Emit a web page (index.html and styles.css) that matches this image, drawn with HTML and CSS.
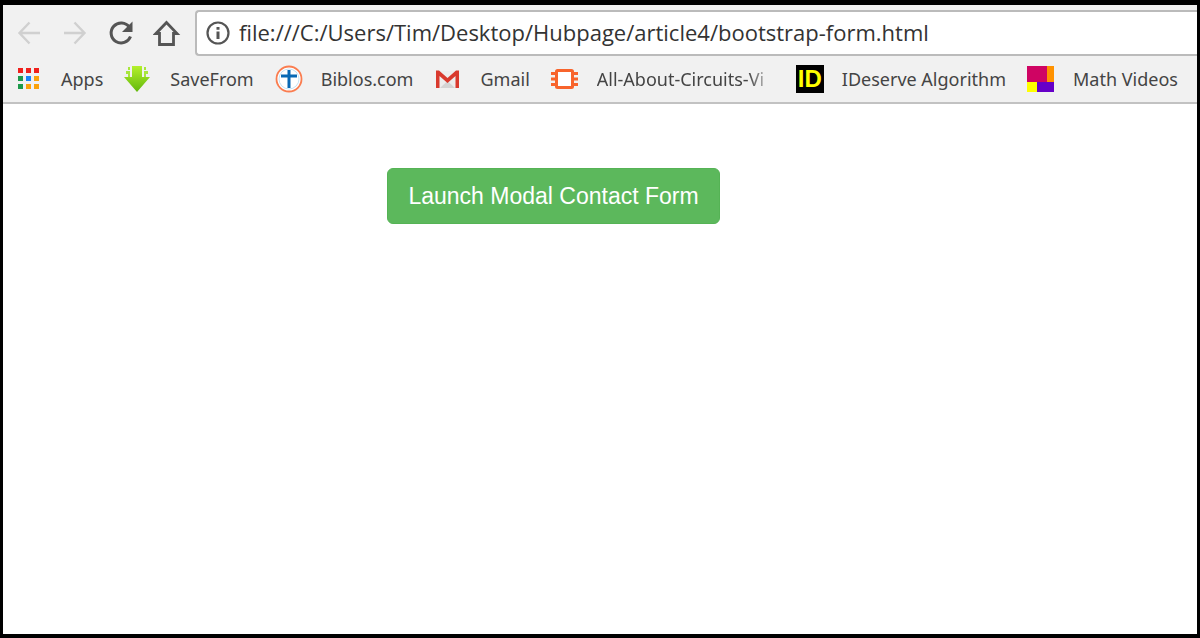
FILE: index.html
```html
<!DOCTYPE html>
<html lang="en">
<head>
<meta charset="utf-8">
<title>Bootstrap form</title>
<link rel="stylesheet" href="styles.css">
</head>
<body>
<div class="browser">
  <header class="chrome">
    <div class="toolbar">
      <div class="nav-group">
        <button class="nav-button nav-button--off" type="button" aria-label="Back">
          <svg viewBox="0 0 28 28"><path d="M25 14H5M14.500 3.500L4.500 14L14.500 24.500" fill="none" stroke="currentColor" stroke-width="2.400"/></svg>
        </button>
        <button class="nav-button nav-button--off" type="button" aria-label="Forward">
          <svg viewBox="0 0 28 28"><path d="M3 14H23M13.500 3.500L23.500 14L13.500 24.500" fill="none" stroke="currentColor" stroke-width="2.400"/></svg>
        </button>
        <button class="nav-button" type="button" aria-label="Reload">
          <svg viewBox="0 0 28 28"><path d="M22.300 8.200A10 10 0 1 0 23.500 17.500" fill="none" stroke="currentColor" stroke-width="3"/><path d="M25.500 2.500V13H15Z" fill="currentColor"/></svg>
        </button>
        <button class="nav-button" type="button" aria-label="Home">
          <svg viewBox="0 0 28 28"><path d="M13.500 3.500L3 14.500H6.500V25.500H20.500V14.500H24Z" fill="none" stroke="currentColor" stroke-width="2.800"/></svg>
        </button>
      </div>
      <label class="address">
        <svg class="info" viewBox="0 0 24 24" role="img" aria-label="Page information"><circle cx="12" cy="12" r="10.500" fill="none" stroke="currentColor" stroke-width="2.200"/><path d="M10.500 10.500h3v7.500h-3zM10.500 6h3v2.800h-3z" fill="currentColor"/></svg>
        <input class="url" type="text" aria-label="Address" value="file:///C:/Users/Tim/Desktop/Hubpage/article4/bootstrap-form.html">
      </label>
    </div>
    <nav class="bookmarks" aria-label="Bookmarks">
      <a class="bookmark" href="#">
        <svg class="icon" viewBox="0 0 28 28"><path d="M3 3h5v5H3zM11 3h5v5h-5zM19 3h5v5h-5z" fill="#f0201c"/><path d="M3 11h5v5H3zM3 19h5v5H3z" fill="#1d9a4b"/><path d="M11 11h5v5h-5z" fill="#1a84f8"/><path d="M19 11h5v5h-5zM11 19h5v5h-5zM19 19h5v5h-5z" fill="#fba30a"/></svg>
        <span class="label">Apps</span>
      </a>
      <a class="bookmark" href="#">
        <svg class="icon" viewBox="0 0 28 28"><defs><linearGradient id="leaf" x2="0" y2="1"><stop offset="0" stop-color="#b4f02c"/><stop offset="1" stop-color="#62b80c"/></linearGradient></defs><path d="M8 1H18V12H26L13 27L0 12H8Z" fill="url(#leaf)"/><path d="M4 2h2v3H4zM20 2h2v3h-2zM2 6h4v3H2zM20 6h4v3h-4zM4 9h2v3H4zM20 9h2v3h-2z" fill="#a8e63c"/></svg>
        <span class="label">SaveFrom</span>
      </a>
      <a class="bookmark" href="#">
        <svg class="icon" viewBox="0 0 28 28"><circle cx="14" cy="14" r="12.500" fill="#fff" stroke="#fa7d50" stroke-width="1.800"/><circle cx="14" cy="14" r="10" fill="none" stroke="#c4e2f4" stroke-width="1"/><path d="M12.500 5h3v4.500H22v3h-6.500V23h-3V12.500H6v-3h6.500z" fill="#0868b4"/></svg>
        <span class="label">Biblos.com</span>
      </a>
      <a class="bookmark" href="#">
        <svg class="icon" viewBox="0 0 28 28"><path d="M3 6H24V23H3Z" fill="#ededed"/><path d="M6 23L13.500 16L21 23Z" fill="#d4d4d4"/><path d="M2 23V5.500H5L13.500 13L22 5.500H25V23H21.500V11L13.500 18L5.500 11V23Z" fill="#d93a2e"/></svg>
        <span class="label">Gmail</span>
      </a>
      <a class="bookmark" href="#">
        <svg class="icon" viewBox="0 0 28 28"><rect x="5.500" y="5.500" width="16" height="17" rx="1" fill="#fff" stroke="#f8642c" stroke-width="3"/><path d="M0 7h5v3H0zM0 12.500h5v3H0zM0 18h5v3H0zM22 7h5v3h-5zM22 12.500h5v3h-5zM22 18h5v3h-5z" fill="#f8642c"/></svg>
        <span class="label label--faded">All-About-Circuits-Vi</span>
      </a>
      <a class="bookmark" href="#">
        <span class="icon icon--id">ID</span>
        <span class="label">IDeserve Algorithm</span>
      </a>
      <a class="bookmark" href="#">
        <svg class="icon" viewBox="0 0 28 28" shape-rendering="crispEdges"><path d="M0 1h20v16H0z" fill="#cf0463"/><path d="M20 1h7v16h-7z" fill="#ff9200"/><path d="M0 17h10v10H0z" fill="#ff0"/><path d="M10 17h17v10H10z" fill="#6600c8"/></svg>
        <span class="label">Math Videos</span>
      </a>
    </nav>
  </header>
  <main class="page">
    <button class="launch" type="button">Launch Modal Contact Form</button>
  </main>
</div>
</body>
</html>
```
FILE: styles.css
```css
* {
  box-sizing: border-box;
}

body {
  margin: 0;
  font-family: "Noto Sans", "Open Sans", sans-serif;
}

.browser {
  display: flex;
  flex-direction: column;
  min-height: 100vh;
  overflow: hidden;
  border: solid #000;
  border-width: 5px 3px 4px;
  background: #fff;
}

.chrome {
  border-bottom: 2px solid #c2c2c2;
  background: #f1f1f1;
}

.toolbar {
  display: flex;
  align-items: center;
  gap: 14px;
  padding: 5px 0 0 12px;
}

.nav-group {
  display: flex;
  flex: none;
  gap: 18px;
}

.nav-button {
  width: 28px;
  height: 28px;
  padding: 0;
  border: 0;
  background: none;
  color: #555;
}

.nav-button--off {
  color: #d0d0d0;
}

.nav-button svg {
  display: block;
}

.address {
  display: flex;
  flex: 1;
  align-items: center;
  gap: 9px;
  height: 46px;
  padding-left: 9px;
  border: 2px solid #bbb;
  border-right: 0;
  border-radius: 4px 0 0 4px;
  background: #fff;
  color: #555;
}

.info {
  flex: none;
  width: 24px;
  height: 24px;
}

.url {
  flex: 1;
  min-width: 0;
  padding: 0 0 2px;
  border: 0;
  outline: 0;
  background: none;
  color: #333;
  font: 22px/30px "Open Sans", "Noto Sans", sans-serif;
}

.bookmarks {
  display: flex;
  gap: 21px;
  padding: 9px 0 9px 12px;
}

.bookmark {
  display: flex;
  flex: none;
  align-items: center;
  gap: 18px;
  color: #444;
  font-size: 18px;
  line-height: 28px;
  text-decoration: none;
}

.icon {
  flex: none;
  width: 28px;
  height: 28px;
}

.icon--id {
  background: #000;
  color: #ff0;
  font: bold 24px/28px "Liberation Sans", sans-serif;
  text-align: center;
}

.label {
  white-space: nowrap;
}

.label--faded {
  min-width: 178px;
  mask-image: linear-gradient(to right, #000 85%, transparent);
}

.page {
  flex: 1;
  padding: 64px 32.2%;
}

.launch {
  padding: 12px 20px;
  border: 1px solid #55b355;
  border-radius: 6px;
  background: #5cb85c;
  color: #fff;
  font: 23px/30px "Liberation Sans", Arial, sans-serif;
  white-space: nowrap;
}
```
